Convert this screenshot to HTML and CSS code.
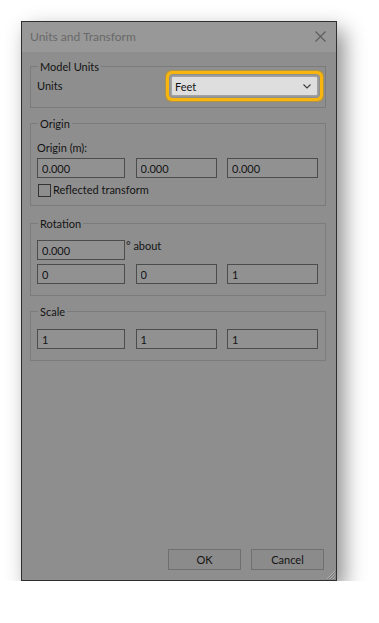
FILE: index.html
```html
<!DOCTYPE html>
<html lang="en">
<head>
<meta charset="utf-8">
<title>Units and Transform</title>
<link rel="stylesheet" href="styles.css">
</head>
<body>
<div class="dialog">
  <div class="titlebar">
    <span class="title">Units and Transform</span>
    <svg class="close" width="11" height="11" viewBox="0 0 11 11"><path d="M0.5 0.5 L10.5 10.5 M10.5 0.5 L0.5 10.5" stroke="#5c5c5c" stroke-width="1.1" fill="none"/></svg>
  </div>
  <div class="content">
    <div class="group g-units">
      <span class="group-title">Model Units</span>
      <div class="units-row">
        <span class="label">Units</span>
        <div class="select">
          <span>Feet</span>
          <svg width="8" height="5" viewBox="0 0 8 5"><path d="M0.5 0.5 L4 4 L7.5 0.5" stroke="#3c3c3c" stroke-width="1.1" fill="none"/></svg>
        </div>
      </div>
    </div>

    <div class="group g-origin">
      <span class="group-title">Origin</span>
      <span class="label origin-label">Origin (m):</span>
      <div class="triple">
        <input class="field" type="text" value="0.000">
        <input class="field" type="text" value="0.000">
        <input class="field" type="text" value="0.000">
      </div>
      <div class="check-row">
        <span class="checkbox"></span>
        <span class="label">Reflected transform</span>
      </div>
    </div>

    <div class="group g-rotation">
      <span class="group-title">Rotation</span>
      <div class="angle-row">
        <input class="field angle" type="text" value="0.000">
        <span class="label about">° about</span>
      </div>
      <div class="triple">
        <input class="field" type="text" value="0">
        <input class="field" type="text" value="0">
        <input class="field" type="text" value="1">
      </div>
    </div>

    <div class="group g-scale">
      <span class="group-title">Scale</span>
      <div class="triple">
        <input class="field" type="text" value="1">
        <input class="field" type="text" value="1">
        <input class="field" type="text" value="1">
      </div>
    </div>

    <div class="footer">
      <button class="btn" type="button">OK</button>
      <button class="btn" type="button">Cancel</button>
    </div>
  </div>
  <svg class="grip" width="12" height="12" viewBox="0 0 12 12">
    <path d="M11 3 L3 11 M11 6 L6 11 M11 9 L9 11" stroke="#b4b4b4" stroke-width="1" fill="none"/>
    <path d="M12 3 L3 12 M12 6 L6 12 M12 9 L9 12" stroke="#7a7a7a" stroke-width="1" fill="none"/>
  </svg>
</div>
</body>
</html>
```

FILE: styles.css
```css
* { box-sizing: border-box; }

html, body {
  margin: 0;
  padding: 0;
  background: #ffffff;
}

body {
  padding: 21px 0 0 21px;
  font-family: Lato, "Liberation Sans", sans-serif;
  font-size: 11px;
  color: #141414;
}

.dialog {
  position: relative;
  width: 316px;
  height: 560px;
  border: 1px solid #2f2f2f;
  background: #8e8e8e;
  display: flex;
  flex-direction: column;
  box-shadow: 7px 9px 20px rgba(0, 0, 0, 0.45);
}

.titlebar {
  height: 30px;
  flex: none;
  background: #989898;
  display: flex;
  align-items: center;
  justify-content: space-between;
  padding: 0 10px 0 8px;
}

.title {
  font-size: 12px;
  color: #686868;
  line-height: 16px;
  margin-top: -1px;
}

.close {
  display: block;
  margin-top: -1px;
}

.content {
  flex: 1;
  display: flex;
  flex-direction: column;
  padding: 14px 10px 0 8px;
}

.group {
  border: 1px solid #7b7b7b;
  display: flex;
  flex-direction: column;
  padding: 0 7px 11px 6px;
}

.g-origin { margin-top: 15px; padding-bottom: 7px; }
.g-rotation { margin-top: 17px; }
.g-scale { margin-top: 15px; }

.group-title {
  align-self: flex-start;
  margin: -8px 0 0 1px;
  padding: 0 2px;
  line-height: 16px;
  background: #8e8e8e;
}

.label {
  line-height: 16px;
}

.units-row {
  margin-top: 1px;
  display: flex;
  align-items: center;
  justify-content: space-between;
}

.select {
  width: 147px;
  height: 20px;
  border: 1px solid #a2a2a2;
  background: #dedede;
  display: flex;
  align-items: center;
  justify-content: space-between;
  padding: 0 6px 0 3px;
  box-shadow: 0 0 0 1px #9a9a9a, 0 0 0 2px #8f8f8f, 0 0 0 5px #f8b50e, 0 0 0 6px rgba(200, 150, 20, 0.6);
  border-radius: 2px;
}

.select svg { display: block; }

.origin-label {
  margin-top: 8px;
}

.triple {
  margin-top: 2px;
  display: grid;
  grid-template-columns: 88px 81px 91px;
  justify-content: space-between;
}

.field {
  display: block;
  width: 100%;
  height: 20px;
  margin: 0;
  border: 1px solid #4c4c4c;
  background: #919191;
  font: inherit;
  color: #141414;
  padding: 0 0 0 4px;
  outline: none;
}

.check-row {
  margin-top: 4px;
  display: flex;
  align-items: center;
  gap: 2px;
}

.checkbox {
  width: 13px;
  height: 13px;
  border: 1px solid #333333;
  margin-left: 1px;
}

.angle-row {
  margin-top: 8px;
  display: flex;
  align-items: flex-start;
}

.angle {
  width: 88px;
}

.about {
  margin-top: -2px;
  padding-left: 1px;
}

.g-rotation .triple { margin-top: 4px; }
.g-scale .triple { margin-top: 9px; }

.footer {
  margin-top: auto;
  display: flex;
  justify-content: flex-end;
  gap: 10px;
  padding: 0 2px 10px 0;
}

.btn {
  width: 73px;
  height: 21px;
  margin: 0;
  border: 1px solid #6f6f6f;
  background: #8b8b8b;
  font: inherit;
  color: #141414;
  padding: 0;
}

.grip {
  position: absolute;
  right: 0;
  bottom: 0;
  display: block;
}
```
